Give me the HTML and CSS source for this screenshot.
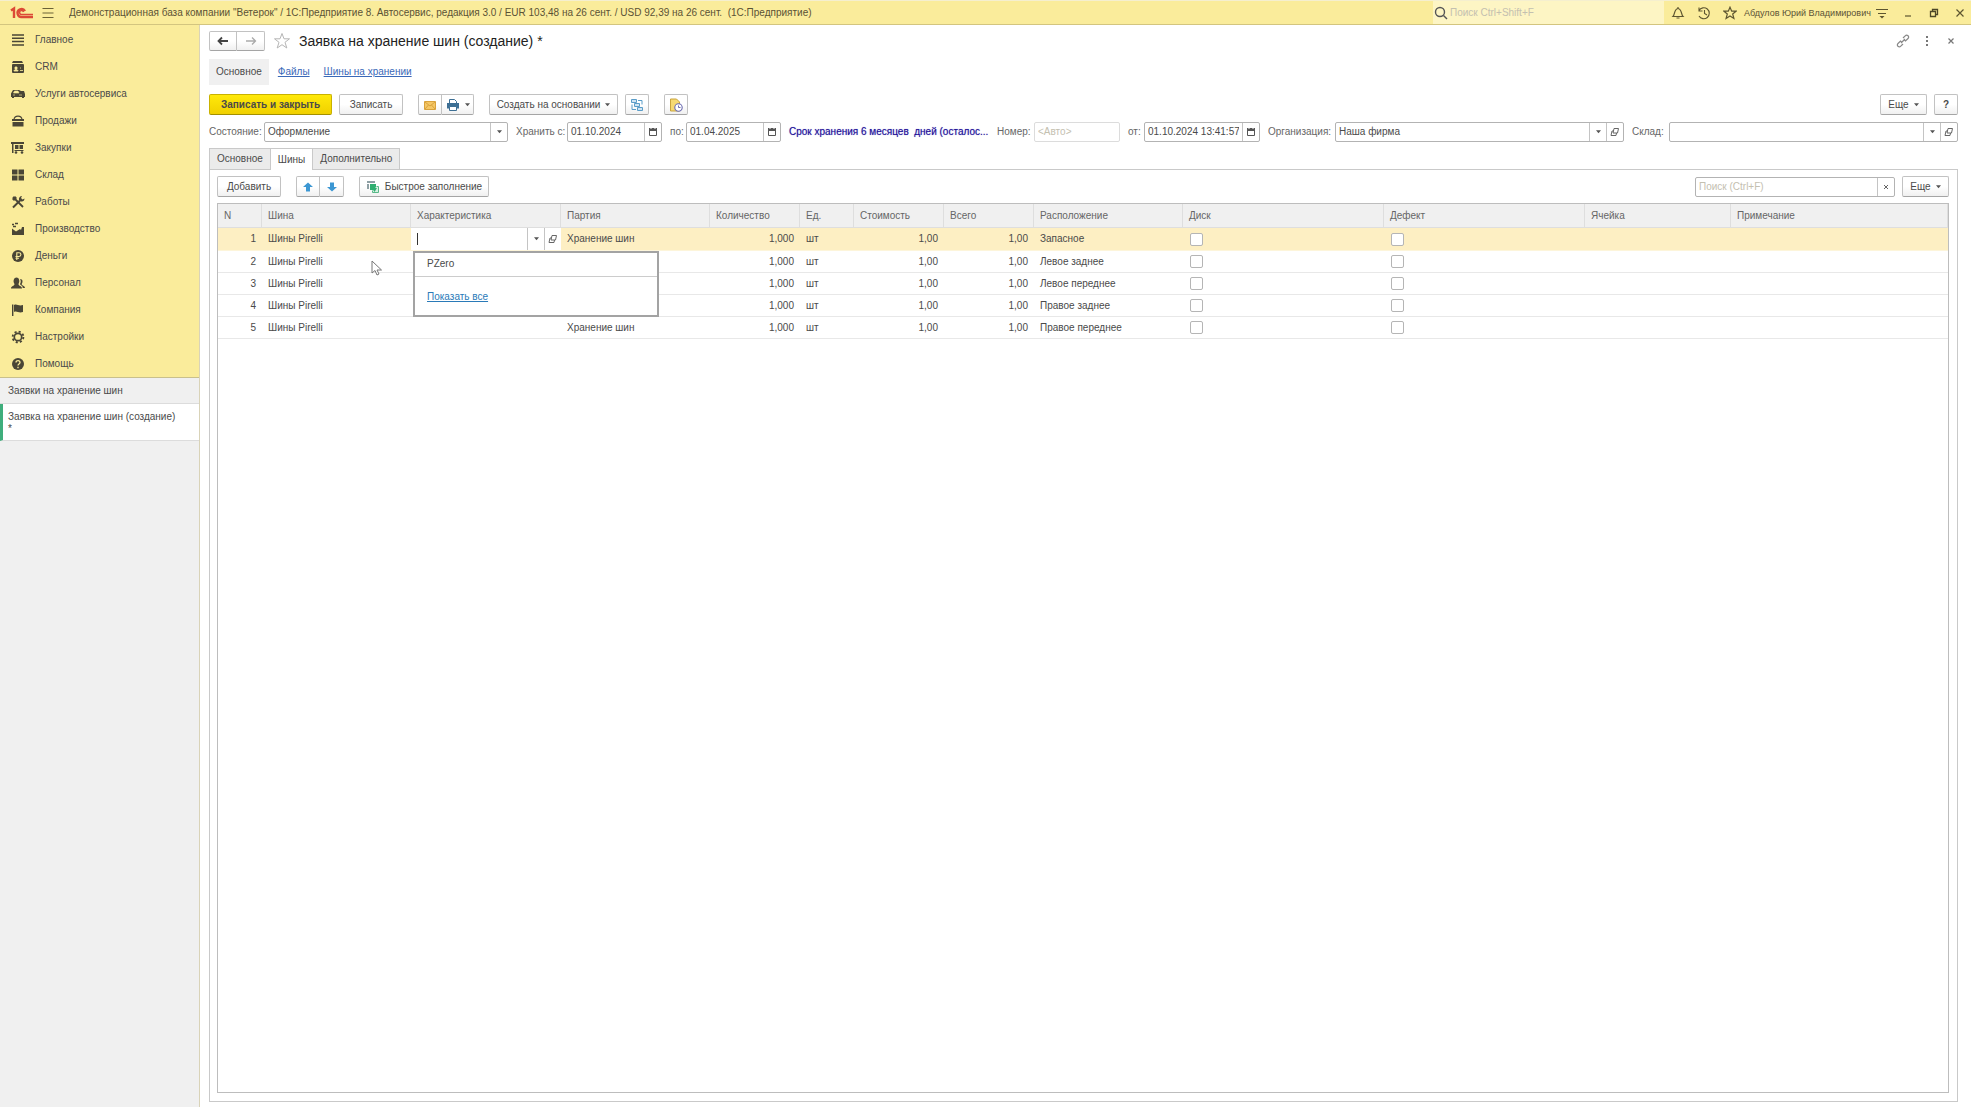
FILE: index.html
```html
<!DOCTYPE html>
<html lang="ru">
<head>
<meta charset="utf-8">
<meta name="viewport" content="width=device-width, initial-scale=1">
<title>Заявка на хранение шин (создание) *</title>
<link rel="stylesheet" href="styles.css">
</head>
<body>
<svg class="defs" aria-hidden="true">
  <symbol id="cal" viewBox="0 0 10 10"><path d="M1.5 2.5h7v6h-7z" fill="none" stroke="#555"/><path d="M1 1h8v3H1z" fill="#555"/><path d="M3 0v2M7 0v2" stroke="#fff"/></symbol>
  <symbol id="caret" viewBox="0 0 6 4"><path d="M0 0h6L3 3.5z" fill="#555"/></symbol>
  <symbol id="open" viewBox="0 0 10 10"><path d="M4 1.500h4.500L7.500 6H3zM6.500 6 6 8.500H1L2 4h1.500" fill="none" stroke="#666"/></symbol>
</svg>

<header class="topbar">
  <svg class="logo" viewBox="0 0 24 14"><g fill="none" stroke="#dc4a36" stroke-width="2.400"><path d="M1 4.500 4 2.500V12"/><path d="M15 5A4 4 0 1 0 12 11h11"/><path d="M13.500 6A2 2 0 1 0 12 8.500h11" stroke-width="1.500"/></g></svg>
  <button class="plain" aria-label="Меню"><svg class="i14" viewBox="0 0 14 14"><path d="M1.500 2.500h11M1.500 7h11M1.500 11.500h11" stroke="#6b6237" fill="none"/></svg></button>
  <div class="app-title">Демонстрационная база компании "Ветерок" / 1С:Предприятие 8. Автосервис, редакция 3.0 / EUR 103,48 на 26 сент. / USD 92,39 на 26 сент.&nbsp; (1С:Предприятие)</div>
  <div class="top-search">
    <svg class="i14" viewBox="0 0 14 14"><g fill="none" stroke="#555" stroke-width="1.400"><circle cx="6" cy="6" r="4.500"/><path d="m9.500 9.500 3.500 3.500"/></g></svg>
    <input type="search" aria-label="Поиск" placeholder="Поиск Ctrl+Shift+F">
  </div>
  <div class="top-tools">
    <button class="plain" aria-label="Уведомления"><svg class="i14" viewBox="0 0 14 14"><path d="M7 1v1.500M2 10.500c2-2 1-7.500 5-8 4 .5 3 6 5 8zM5.500 12h3" fill="none" stroke="#5d5530" stroke-width="1.200"/></svg></button>
    <button class="plain" aria-label="История"><svg class="i14" viewBox="0 0 14 14"><path d="M2 4.500A5.500 5.500 0 1 1 2 10M2 1.500v3.500h3.500M7.500 4v3.500l2.500 1.500" fill="none" stroke="#5d5530" stroke-width="1.100"/></svg></button>
    <button class="plain" aria-label="Избранное"><svg class="i14" viewBox="0 0 14 14"><path d="m7 1.200 1.700 4H13L9.700 8l1.200 4.500L7 10l-3.900 2.500L4.300 8 1 5.200h4.300z" fill="none" stroke="#5d5530" stroke-width="1.200"/></svg></button>
  </div>
  <a class="user" href="#">Абдулов Юрий Владимирович</a>
  <div class="win-tools">
    <button class="plain" aria-label="Настройки окна"><svg class="i14" viewBox="0 0 14 14"><path d="M1 3.500h12M3 7.500h8" stroke="#5d5530" stroke-width="1.200"/><path d="M4.500 10h5L7 12.500z" fill="#5d5530"/></svg></button>
    <button class="plain" aria-label="Свернуть"><svg class="i14" viewBox="0 0 14 14"><path d="M4 10h6" stroke="#5d5530" stroke-width="1.200"/></svg></button>
    <button class="plain" aria-label="Восстановить"><svg class="i14" viewBox="0 0 14 14"><path d="M3.500 5.500h5v5h-5zM5.500 5V3.500h5v5H9" fill="none" stroke="#4d4728" stroke-width="1.300"/></svg></button>
    <button class="plain" aria-label="Закрыть"><svg class="i14" viewBox="0 0 14 14"><path d="m3.500 3.500 7 7m0-7-7 7" stroke="#5d5530" stroke-width="1.200"/></svg></button>
  </div>
</header>

<div class="body">
  <aside class="side">
    <nav class="sections">
      <a href="#"><svg class="i14" viewBox="0 0 14 14"><path d="M1 2h12M1 5.300h12M1 8.600h12M1 12h12" stroke="#4a4636" stroke-width="1.500"/></svg>Главное</a>
      <a href="#"><svg class="i14" viewBox="0 0 14 14"><path d="M2 1h9l1 2H1z" fill="#4a4636"/><rect x="1" y="4" width="12" height="9" rx="1" fill="#4a4636"/><path d="M3 11c0-2 4-2 4 0zM4 7h2v2H4zM9 8h1M9 10.500h3" fill="#faec9b" stroke="#faec9b" stroke-width=".8"/></svg>CRM</a>
      <a href="#"><svg class="i14" viewBox="0 0 14 14"><path d="M0 6.500 2 3h6l2 1h3l1 3v3h-1v1h-2v-1H3v1H1v-1H0z" fill="#4a4636"/><path d="M2.500 6 3.500 4H7l1 2zM2 8h2M8 8h3" fill="#faec9b" stroke="#faec9b" stroke-width=".6"/></svg>Услуги автосервиса</a>
      <a href="#"><svg class="i14" viewBox="0 0 14 14"><path d="M3 5.500C3.500 1 10.500 1 11 5.500" fill="none" stroke="#4a4636" stroke-width="1.200"/><path d="M1 5h12v2H1zM1.500 8h11v4.500h-11z" fill="#4a4636"/></svg>Продажи</a>
      <a href="#"><svg class="i14" viewBox="0 0 14 14"><path d="M0 1h13v2H2.500v9H1V3H0zM4 4h3.500v4H4zM8.500 4H12v4H8.500zM3.500 9h9v1h-9z" fill="#4a4636"/><circle cx="5" cy="11.500" r="1.300" fill="#4a4636"/><circle cx="11" cy="11.500" r="1.300" fill="#4a4636"/></svg>Закупки</a>
      <a href="#"><svg class="i14" viewBox="0 0 14 14"><path d="M1 1.500h5.500v5H1zM7.500 1.500H13v5H7.500zM1 7.500h5.500v5H1zM7.500 7.500H13v5H7.500z" fill="#4a4636"/></svg>Склад</a>
      <a href="#"><svg class="i14" viewBox="0 0 14 14"><path d="m2 2 10 10" stroke="#4a4636" stroke-width="1.800"/><path d="M2 12.500 9 5.500" stroke="#4a4636" stroke-width="2"/><path d="M8 5c-.5-2 1-4 3-4L10 3l1.500 1.500 2-1c0 2-1.500 3.500-3.500 3zM1 4l3-3 2 2-3 3z" fill="#4a4636"/></svg>Работы</a>
      <a href="#"><svg class="i14" viewBox="0 0 14 14"><path d="M1 13V6.500L5 9.500 9 7l1 1 1-3h2v8z" fill="#4a4636"/><path d="M1 2.500h2M4 1.500h3M2 4.500h3" stroke="#4a4636" stroke-width="1.600"/></svg>Производство</a>
      <a href="#"><svg class="i14" viewBox="0 0 14 14"><circle cx="7" cy="7" r="6" fill="#4a4636"/><path d="M5.800 11V3.700H8a1.900 1.900 0 0 1 0 3.800H4.500M4.500 9.200H8" fill="none" stroke="#faec9b" stroke-width="1.100"/></svg>Деньги</a>
      <a href="#"><svg class="i14" viewBox="0 0 14 14"><path d="M0 12.500c0-3 3.500-2 3.500-4.500C1.500 5 3 1.500 5.500 1.500S9.300 5 7.500 8c0 2.500 3.500 1.500 3.500 4.500z" fill="#4a4636"/><path d="M9 3c3 0 3 3 1.700 5 0 2 3.300 1.500 3.300 4h-2.300c0-3-2.500-2.500-2.700-4C10 6.500 10 4.500 9 3z" fill="#4a4636"/></svg>Персонал</a>
      <a href="#"><svg class="i14" viewBox="0 0 14 14"><path d="M1.700 1.500V13" stroke="#4a4636" stroke-width="1.400"/><path d="M3 2c3-1.500 4.500 1.500 9 0v7c-4.500 1.500-6-1.500-9 0z" fill="#4a4636"/></svg>Компания</a>
      <a href="#"><svg class="i14" viewBox="0 0 14 14"><circle cx="7" cy="7" r="3.700" fill="none" stroke="#4a4636" stroke-width="1.700"/><circle cx="7" cy="7" r="5.400" fill="none" stroke="#4a4636" stroke-width="1.800" stroke-dasharray="2.120 2.120"/></svg>Настройки</a>
      <a href="#"><svg class="i14" viewBox="0 0 14 14"><circle cx="7" cy="7" r="6" fill="#4a4636"/><path d="M5 5.500c0-2.500 4-2.500 4 0C9 7 7 7 7 8.500M7 9.700v1.500" fill="none" stroke="#faec9b" stroke-width="1.300"/></svg>Помощь</a>
    </nav>
    <nav class="windows">
      <a href="#">Заявки на хранение шин</a>
      <a href="#" class="current">Заявка на хранение шин (создание) *</a>
    </nav>
  </aside>

  <main class="main">
    <div class="head">
      <div class="pair">
        <button class="btn" aria-label="Назад"><svg class="i14" viewBox="0 0 14 14"><path d="M2.500 7H12M6 3.500 2.500 7 6 10.500" fill="none" stroke="#444" stroke-width="1.800"/></svg></button>
        <button class="btn" aria-label="Вперед"><svg class="i14" viewBox="0 0 14 14"><path d="M2 7h9.500M8 3.500 11.500 7 8 10.500" fill="none" stroke="#aaa" stroke-width="1.300"/></svg></button>
      </div>
      <button class="plain" aria-label="В избранное"><svg class="i18" viewBox="0 0 18 18"><path d="m9 1.500 2 5.300h5.500L12 10.300l1.800 5.700L9 12.700 4.200 16 6 10.300 1.500 6.800H7z" fill="none" stroke="#b5b5b5"/></svg></button>
      <h1>Заявка на хранение шин (создание) *</h1>
      <div class="head-tools">
        <button class="plain" aria-label="Ссылка"><svg class="i14" viewBox="0 0 14 14"><g fill="none" stroke="#888" stroke-width="1.200"><path d="M6 8.500 4.500 7 2 9.500C0 11.500 3 14 4.800 12.200L7 10M8 5.500 9.500 7 12 4.500C14 2.500 11 0 9.200 1.800L7 4M5 9l4-4"/></g></svg></button>
        <button class="plain" aria-label="Действия"><svg class="i14" viewBox="0 0 14 14"><path d="M6 2h2v2H6zM6 6h2v2H6zM6 10h2v2H6z" fill="#777"/></svg></button>
        <button class="plain" aria-label="Закрыть форму"><svg class="i14" viewBox="0 0 14 14"><path d="m4.500 4.500 5 5m0-5-5 5" stroke="#777" stroke-width="1.200"/></svg></button>
      </div>
    </div>

    <nav class="links">
      <a href="#" class="here">Основное</a>
      <a href="#">Файлы</a>
      <a href="#">Шины на хранении</a>
    </nav>

    <div class="bar commands">
      <button class="btn primary">Записать и закрыть</button>
      <button class="btn w-save">Записать</button>
      <div class="pair gap-l">
        <button class="btn w-icon" aria-label="Письмо"><svg class="i14" viewBox="0 0 14 14"><path d="M1.500 3.500h11v8h-11z" fill="#f5c765" stroke="#d9a23c"/><path d="m2 4 5 4 5-4M2 11l3.500-4M12 11 8.500 7" fill="none" stroke="#d9a23c"/></svg></button>
        <button class="btn w-print" aria-label="Печать"><svg class="i14" viewBox="0 0 14 14"><path d="M3.500 5V1.500h5l2 2V5" fill="#fff" stroke="#3d6f94"/><path d="M1 5h12v5.500H1z" fill="#3d6f94"/><path d="M3.500 8.500h7v4h-7z" fill="#fff" stroke="#3d6f94"/></svg><svg class="caret"><use href="#caret"/></svg></button>
      </div>
      <button class="btn w-create gap-l">Создать на основании<svg class="caret"><use href="#caret"/></svg></button>
      <button class="btn w-icon" aria-label="Структура подчиненности"><svg class="i14" viewBox="0 0 14 14"><g fill="#cfe4f3" stroke="#5a9dc8"><path d="M1.500 1.500h5v3h-5zM4.500 5.500h5v3h-5zM7.500 9.500h5v3h-5z"/><path d="M8 2.500h4v4M2 6.500v5h4" fill="none"/></g></svg></button>
      <button class="btn w-icon gap-l" aria-label="Отложить"><svg class="i14" viewBox="0 0 14 14"><path d="M1.500 1h6l3 3v9h-9z" fill="#f6d973" stroke="#c9a43d"/><circle cx="9.500" cy="9.500" r="3.700" fill="#fff" stroke="#6a6ab0" stroke-width="1.100"/><path d="M9.500 7.500v2h2" fill="none" stroke="#6a6ab0"/></svg></button>
      <span class="spacer"></span>
      <button class="btn w-more">Еще<svg class="caret"><use href="#caret"/></svg></button>
      <button class="btn w-icon strong">?</button>
    </div>

    <div class="bar fields">
      <div class="group"><label class="l-state" for="state">Состояние:</label>
        <div class="field f-state"><input id="state" value="Оформление"><button aria-label="Выбрать состояние"><svg class="caret"><use href="#caret"/></svg></button></div></div>
      <div class="group"><label class="l-from" for="from">Хранить с:</label>
        <div class="field f-date"><input id="from" value="01.10.2024"><button aria-label="Календарь"><svg class="i10"><use href="#cal"/></svg></button></div></div>
      <div class="group"><label class="l-to" for="to">по:</label>
        <div class="field f-date"><input id="to" value="01.04.2025"><button aria-label="Календарь"><svg class="i10"><use href="#cal"/></svg></button></div></div>
      <div class="term">Срок хранения 6 месяцев&nbsp; дней (осталос...</div>
      <div class="group"><label class="l-num" for="num">Номер:</label>
        <div class="field f-num"><input id="num" placeholder="&lt;Авто&gt;"></div></div>
      <div class="group"><label class="l-to" for="date">от:</label>
        <div class="field f-time"><input id="date" value="01.10.2024 13:41:57"><button aria-label="Календарь"><svg class="i10"><use href="#cal"/></svg></button></div></div>
      <div class="group grow"><label class="l-org" for="org">Организация:</label>
        <div class="field"><input id="org" value="Наша фирма"><button aria-label="Выбрать организацию"><svg class="caret"><use href="#caret"/></svg></button><button aria-label="Открыть организацию"><svg class="i10"><use href="#open"/></svg></button></div></div>
      <div class="group grow"><label class="l-num" for="store">Склад:</label>
        <div class="field"><input id="store"><button aria-label="Выбрать склад"><svg class="caret"><use href="#caret"/></svg></button><button aria-label="Открыть склад"><svg class="i10"><use href="#open"/></svg></button></div></div>
    </div>

    <div class="tabs" role="tablist">
      <button role="tab">Основное</button>
      <button role="tab" aria-selected="true" class="on">Шины</button>
      <button role="tab">Дополнительно</button>
    </div>

    <section class="panel">
      <div class="bar table-bar">
        <button class="btn w-save">Добавить</button>
        <div class="pair gap-l">
          <button class="btn w-icon" aria-label="Вверх"><svg class="i14" viewBox="0 0 14 14"><path d="m7 2.500 5 4.500H9v4.500H5V7H2z" fill="#3c97d3"/></svg></button>
          <button class="btn w-icon" aria-label="Вниз"><svg class="i14" viewBox="0 0 14 14"><path d="m7 11.500 5-4.500H9V2.500H5V7H2z" fill="#3c97d3"/></svg></button>
        </div>
        <button class="btn w-fill gap-l"><svg class="i14" viewBox="0 0 14 14"><path d="M1 1h8v2H1zM1 4h2v5H1z" fill="#8fa0a5"/><path d="M4 4h6v6H4z" fill="#2fae70"/><path d="M10.500 6.500h2v6h-6v-2" fill="#d6f0e1" stroke="#58b888"/><path d="M6 8h5l-2.500 4z" fill="#2fae70"/></svg>Быстрое заполнение</button>
        <span class="spacer"></span>
        <div class="field f-find"><input type="text" aria-label="Поиск в таблице" placeholder="Поиск (Ctrl+F)"><button aria-label="Очистить"><svg class="i10" viewBox="0 0 10 10"><path d="m3 3 4 4m0-4-4 4" stroke="#666"/></svg></button></div>
        <button class="btn w-more">Еще<svg class="caret"><use href="#caret"/></svg></button>
      </div>

      <div class="grid">
        <table>
          <colgroup><col class="c-n"><col class="c-m"><col class="c-h"><col class="c-m"><col class="c-s"><col class="c-u"><col class="c-s"><col class="c-s"><col class="c-m"><col class="c-l"><col class="c-l"><col class="c-y"><col></colgroup>
          <thead><tr><th>N</th><th>Шина</th><th>Характеристика</th><th>Партия</th><th>Количество</th><th>Ед.</th><th>Стоимость</th><th>Всего</th><th>Расположение</th><th>Диск</th><th>Дефект</th><th>Ячейка</th><th>Примечание</th></tr></thead>
          <tbody>
            <tr class="sel"><td class="r">1</td><td>Шины Pirelli</td>
              <td class="edit"><div class="editor"><span class="text-caret"></span><input aria-label="Характеристика"><button aria-label="Выбрать"><svg class="caret"><use href="#caret"/></svg></button><button aria-label="Открыть"><svg class="i10"><use href="#open"/></svg></button></div>
                <div class="popup"><div class="option">PZero</div><div class="all"><a href="#">Показать все</a></div></div></td>
              <td>Хранение шин</td><td class="r">1,000</td><td>шт</td><td class="r">1,00</td><td class="r">1,00</td><td>Запасное</td><td><input type="checkbox" aria-label="Диск 1"></td><td><input type="checkbox" aria-label="Дефект 1"></td><td></td><td></td></tr>
            <tr><td class="r">2</td><td class="pointed">Шины Pirelli<svg class="cursor" viewBox="0 0 12 16"><path d="M1 1v12l3-2.500 2 4.500 2-1-2-4h4.500z" fill="#fff" stroke="#777"/></svg></td><td></td><td></td><td class="r">1,000</td><td>шт</td><td class="r">1,00</td><td class="r">1,00</td><td>Левое заднее</td><td><input type="checkbox" aria-label="Диск 2"></td><td><input type="checkbox" aria-label="Дефект 2"></td><td></td><td></td></tr>
            <tr><td class="r">3</td><td>Шины Pirelli</td><td></td><td></td><td class="r">1,000</td><td>шт</td><td class="r">1,00</td><td class="r">1,00</td><td>Левое переднее</td><td><input type="checkbox" aria-label="Диск 3"></td><td><input type="checkbox" aria-label="Дефект 3"></td><td></td><td></td></tr>
            <tr><td class="r">4</td><td>Шины Pirelli</td><td></td><td></td><td class="r">1,000</td><td>шт</td><td class="r">1,00</td><td class="r">1,00</td><td>Правое заднее</td><td><input type="checkbox" aria-label="Диск 4"></td><td><input type="checkbox" aria-label="Дефект 4"></td><td></td><td></td></tr>
            <tr><td class="r">5</td><td>Шины Pirelli</td><td></td><td>Хранение шин</td><td class="r">1,000</td><td>шт</td><td class="r">1,00</td><td class="r">1,00</td><td>Правое переднее</td><td><input type="checkbox" aria-label="Диск 5"></td><td><input type="checkbox" aria-label="Дефект 5"></td><td></td><td></td></tr>
          </tbody>
        </table>
      </div>
    </section>
  </main>
</div>
</body>
</html>
```
FILE: styles.css
```css
* { box-sizing: border-box; }
body {
  margin: 0;
  min-height: 100vh;
  display: flex;
  flex-direction: column;
  background: #fff;
  color: #4a4a4a;
  font: 10px/14px "Liberation Sans", Arial, sans-serif;
}
button, input { font: inherit; color: inherit; margin: 0; }
a { color: inherit; text-decoration: none; }
svg { display: block; flex: none; }
.defs { position: absolute; width: 0; height: 0; }
.i10 { width: 10px; height: 10px; }
.i14 { width: 14px; height: 14px; }
.i18 { width: 18px; height: 18px; }
.caret { width: 5px; height: 4px; }
.plain { border: 0; padding: 0; background: none; display: flex; }
.spacer { flex: 1; }

/* Title bar */
.topbar {
  height: 25px;
  display: flex;
  align-items: center;
  padding: 0 4px 0 10px;
  background: #faec9b;
  border-top: 1px solid #f5efcf;
  border-bottom: 1px solid #d3c57f;
  color: #5a5235;
}
.logo { width: 24px; height: 14px; margin-right: 7px; }
.app-title { flex: 1; margin-left: 14px; white-space: nowrap; overflow: hidden; }
.top-search {
  width: 231px;
  align-self: stretch;
  display: flex;
  align-items: center;
  gap: 2px;
  padding-left: 1px;
  background: #fdf5c4;
}
.top-search input { flex: 1; min-width: 0; border: 0; padding: 0; background: none; }
::placeholder { color: #c4c0b0; opacity: 1; }
.top-tools { display: flex; gap: 12px; margin: 0 7px 0 7px; }
.user { width: 127px; font-size: 9px; white-space: nowrap; }
.win-tools { display: flex; gap: 12px; margin-left: 4px; }

/* Left column */
.body { flex: 1; display: flex; }
.side {
  width: 200px;
  flex: none;
  background: #f0f0f0;
  border-right: 1px solid #d9d3b8;
}
.sections { padding-top: 1px; background: #faec9b; border-bottom: 1px solid #c9c08c; }
.sections a { display: flex; align-items: center; gap: 10px; height: 27px; padding-left: 11px; }
.windows a { display: block; padding: 6px 22px 5px 8px; border-bottom: 1px solid #dcdcdc; }
.windows .current { padding: 7px 22px 5px 5px; line-height: 12px; border-left: 3px solid #3fae7c; background: #fff; }

/* Form */
.main { flex: 1; min-width: 0; display: flex; flex-direction: column; padding: 6px 13px 5px 9px; }
.head { display: flex; align-items: center; height: 20px; gap: 8px; }
h1 { flex: 1; margin: 0; font-size: 14px; line-height: 20px; font-weight: 400; color: #222; }
.head-tools { display: flex; gap: 10px; }
.btn {
  height: 21px;
  display: flex;
  align-items: center;
  justify-content: center;
  gap: 5px;
  padding: 0;
  border: 1px solid #c2c2c2;
  border-bottom-color: #a5a5a5;
  border-radius: 2px;
  background: linear-gradient(#fff 50%, #f0f0f0);
  white-space: nowrap;
}
.pair { display: flex; }
.pair .btn:first-child { border-radius: 2px 0 0 2px; }
.pair .btn:last-child { border-radius: 0 2px 2px 0; border-left: 0; }
.head .btn { width: 28px; height: 20px; }
.links { display: flex; align-items: center; gap: 9px; height: 26px; margin-top: 8px; }
.links a { color: #3a68b8; text-decoration: underline; margin-right: 5px; }
.links .here { padding: 6px 7px; margin: 0; background: #f0f0f0; color: #4a4a4a; text-decoration: none; }

.bar { display: flex; align-items: center; gap: 7px; }
.commands { margin-top: 9px; }
.primary { width: 123px; border-color: #c9b200; border-bottom-color: #a39000; background: linear-gradient(#ffe90a, #f0d000); font-weight: 700; }
.strong { font-weight: 700; }
.gap-l { margin-left: 8px; }
.w-save { width: 64px; }
.w-icon { width: 24px; }
.w-print { width: 32px; }
.w-create { width: 129px; }
.w-more { width: 47px; }
.w-fill { width: 130px; }

.fields { gap: 8px; height: 20px; margin-top: 7px; }
.group { display: flex; align-items: center; }
.grow { flex: 1 1 auto; min-width: 0; }
.grow .field { flex: 1; min-width: 0; }
label { flex: none; color: #666; white-space: nowrap; }
.l-state { width: 55px; }
.l-from { width: 51px; }
.l-to { width: 16px; }
.l-num { width: 37px; }
.l-org { width: 67px; }
.field {
  display: flex;
  height: 20px;
  border: 1px solid #b3b3b3;
  border-radius: 2px;
  background: #fff;
}
.field input, .editor input { flex: 1; width: 0; min-width: 0; border: 0; padding: 0 3px; outline: 0; background: none; }
.field button, .editor button {
  width: 17px;
  display: flex;
  align-items: center;
  justify-content: center;
  padding: 0;
  border: 0;
  border-left: 1px solid #c4c4c4;
  background: none;
}
.f-state { width: 244px; }
.f-date { width: 95px; }
.f-num { width: 86px; border-color: #dcdcdc; }
.f-time { width: 116px; }
.f-find { width: 200px; }
.term { width: 200px; color: #1c0f96; text-shadow: 0 0 1px #8a82d0; white-space: nowrap; }

/* Tabs and table */
.tabs { display: flex; margin-top: 6px; }
.tabs button { height: 21px; padding: 0 7px; border: 1px solid #c9c9c9; border-bottom: 0; border-right: 0; background: #ebebeb; }
.tabs button:last-child { border-right: 1px solid #c9c9c9; }
.tabs .on { height: 22px; margin-bottom: -1px; background: #fff; z-index: 1; }
.panel { flex: 1; display: flex; flex-direction: column; padding: 6px 8px 8px 7px; border: 1px solid #c9c9c9; }
.grid { flex: 1; margin-top: 6px; border: 1px solid #bdbdbd; }
table { width: 100%; table-layout: fixed; border-collapse: separate; border-spacing: 0; }
.c-n { width: 44px; }
.c-m { width: 149px; }
.c-h { width: 150px; }
.c-s { width: 90px; }
.c-u { width: 54px; }
.c-l { width: 201px; }
.c-y { width: 146px; }
th, td { height: 22px; padding: 0 6px; border-bottom: 1px solid #e8e8e8; text-align: left; white-space: nowrap; }
th { height: 24px; font-weight: 400; color: #666; background: #f0f0f0; border-right: 1px solid #dedede; border-bottom-color: #dedede; }
.r { text-align: right; }
.sel td { height: 23px; background: #fdefc3; border-bottom-color: #fdf5da; }
.sel .edit { position: relative; padding: 0; background: #fff; }
.editor { display: flex; align-items: center; height: 22px; }
.editor button { align-self: stretch; }
.text-caret { width: 1px; height: 12px; margin-left: 6px; background: #333; }
.popup {
  position: absolute;
  top: 23px;
  left: 2px;
  width: 246px;
  height: 66px;
  z-index: 2;
  border: 2px solid #a3a3a3;
  background: #fff;
}
.option { height: 24px; padding: 4px 12px; border-bottom: 1px solid #ccc; }
.all { padding: 13px 12px; }
.all a { color: #2a7ab8; text-decoration: underline; }
.pointed { position: relative; }
.cursor { position: absolute; left: 109px; top: 9px; width: 12px; height: 16px; }
input[type="checkbox"] {
  appearance: none;
  display: block;
  width: 13px;
  height: 13px;
  margin-left: 1px;
  border: 1px solid #b5b5b5;
  border-radius: 2px;
  background: #fff;
}
```
